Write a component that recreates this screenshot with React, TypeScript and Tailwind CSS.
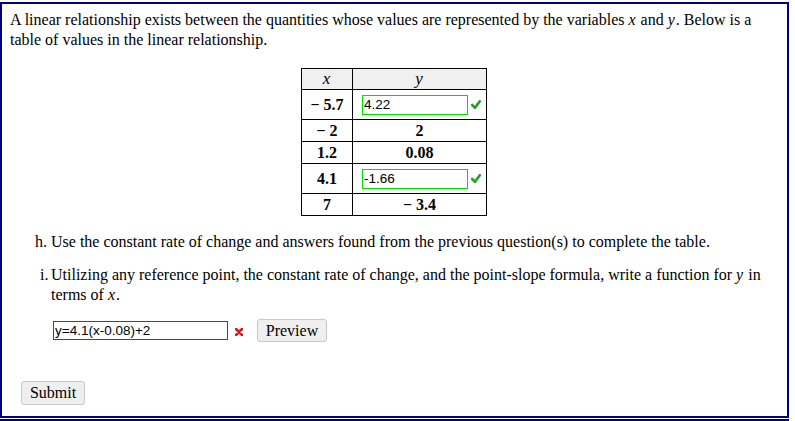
import React from "react";

const serif = { fontFamily: '"Liberation Serif", "Times New Roman", serif' };

const Check = () => (
  <svg width="10" height="9" viewBox="0 0 10 9" className="ml-[3px]">
    <path d="M1.2 5 L4 7.8 L8.8 1.2" stroke="#23a023" strokeWidth="2.6" fill="none" strokeLinecap="round" strokeLinejoin="round" />
  </svg>
);

const Cross = () => (
  <svg width="8" height="8" viewBox="0 0 8 8">
    <path d="M1 1 L7 7 M7 1 L1 7" stroke="#e0161b" strokeWidth="2.6" strokeLinecap="round" />
  </svg>
);

const Var = ({ v }: { v: string }) => <i className="inline-block pr-[1px] font-normal">{v}</i>;

const Num = ({ children }: { children: React.ReactNode }) => (
  <span className="font-bold text-[16px]">{children}</span>
);

const AnswerInput = ({ value }: { value: string }) => (
  <div className="flex items-center pl-[9px]">
    <input
      readOnly
      value={value}
      className="w-[106px] h-[20px] border border-[#00e000] px-[1px] text-[13.5px] text-black outline-none"
      style={{ fontFamily: '"Liberation Sans", Arial, sans-serif' }}
    />
    <Check />
  </div>
);

const rows: { x: string; y: React.ReactNode; tall?: boolean }[] = [
  { x: "\u2212 5.7", y: <AnswerInput value="4.22" />, tall: true },
  { x: "\u2212 2", y: <Num>2</Num> },
  { x: "1.2", y: <Num>0.08</Num> },
  { x: "4.1", y: <AnswerInput value="-1.66" />, tall: true },
  { x: "7", y: <Num>{"\u2212 3.4"}</Num> },
];

export default function App() {
  return (
    <div className="bg-white text-black" style={serif}>
      <div className="mt-[2px] w-[789px] h-[416px] border-2 border-[#000080] pl-[8px] pt-[6px] text-[16px] leading-[20px]">
        <p className="pr-[30px]">
          A linear relationship exists between the quantities whose values are represented by the variables{" "}
          <Var v="x" /> and <Var v="y" />. Below is a table of values in the linear relationship.
        </p>

        <table className="mt-[18px] ml-[291px] border-collapse border border-black text-center">
          <thead>
            <tr className="bg-[#f0f0f0] h-[21px]">
              <th className="w-[51px] border border-black font-normal text-[17px]">
                <Var v="x" />
              </th>
              <th className="w-[134px] border border-black font-normal text-[17px]">
                <Var v="y" />
              </th>
            </tr>
          </thead>
          <tbody>
            {rows.map((r, i) => (
              <tr key={i} className={r.tall ? "h-[30px]" : "h-[22px]"}>
                <td className="border border-black">
                  <Num>{r.x}</Num>
                </td>
                <td className="border border-black">{r.y}</td>
              </tr>
            ))}
          </tbody>
        </table>

        <div className="mt-[16px] pl-[25px] flex">
          <span className="w-[16px]">h.</span>
          <span>Use the constant rate of change and answers found from the previous question(s) to complete the table.</span>
        </div>

        <div className="mt-[13px] pl-[30px] flex pr-[18px]">
          <span className="w-[12px]">i.</span>
          <span>
            Utilizing any reference point, the constant rate of change, and the point-slope formula, write a function for{" "}
            <Var v="y" /> in terms of <Var v="x" />.
          </span>
        </div>

        <div className="mt-[14px] ml-[43px] flex items-center">
          <input
            readOnly
            value="y=4.1(x-0.08)+2"
            className="w-[175px] h-[19px] border border-[#f00000] px-[1px] text-[13.5px] text-black outline-none"
            style={{ fontFamily: '"Liberation Sans", Arial, sans-serif' }}
          />
          <span className="ml-[7px] mt-[2px]">
            <Cross />
          </span>
          <button className="ml-[14px] h-[23px] w-[70px] rounded-[3px] border border-[#c8c8c8] bg-[#efefef] text-[16px] leading-[18px]">
            Preview
          </button>
        </div>

        <button className="mt-[39px] ml-[11px] h-[24px] w-[64px] rounded-[3px] border border-[#c8c8c8] bg-[#efefef] text-[16px] leading-[18px]">
          Submit
        </button>
      </div>
      <div className="mt-[1px] w-[789px] h-[10px] border-2 border-b-0 border-[#000080]" />
    </div>
  );
}
